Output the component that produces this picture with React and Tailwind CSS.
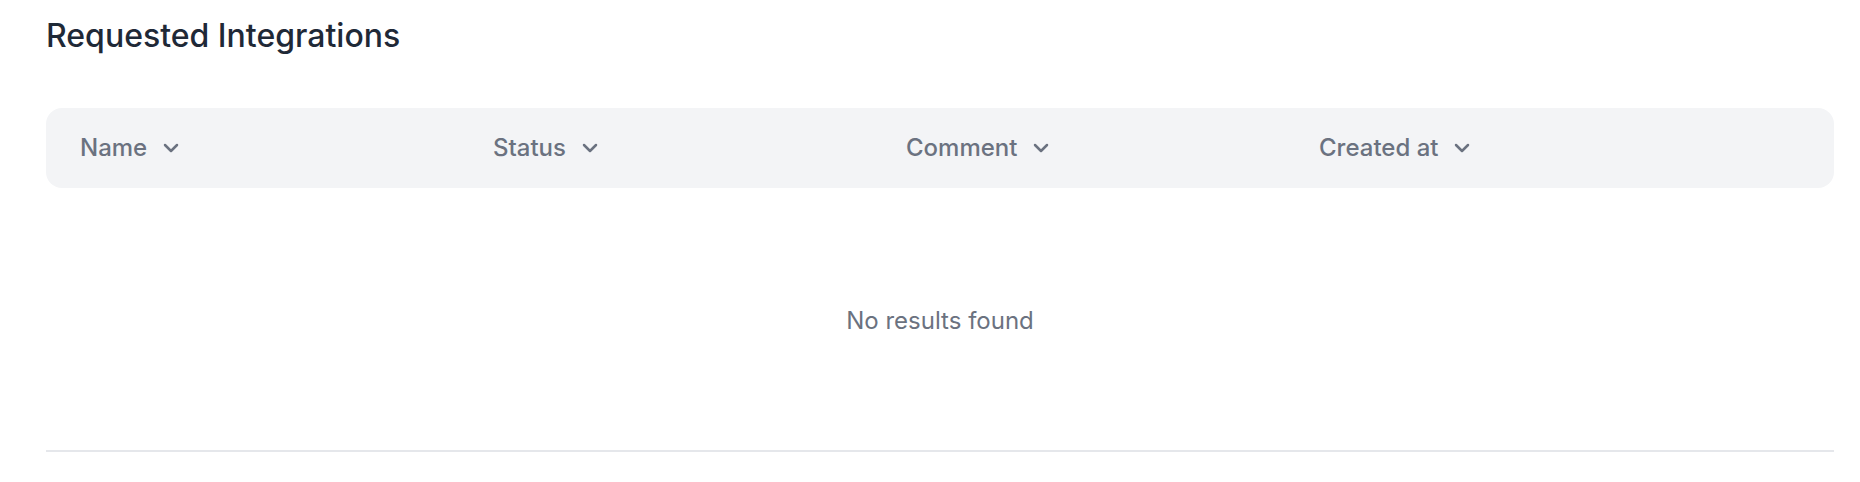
import React from "react";

function Chevron() {
  return (
    <svg width="24" height="24" viewBox="0 0 24 24" fill="none" stroke="currentColor" strokeWidth="2.5" strokeLinecap="round" strokeLinejoin="round" className="text-[#6b7280]">
      <path d="m6 9 6 6 6-6" />
    </svg>
  );
}

const cols = ["Name", "Status", "Comment", "Created at"];

export default function App() {
  return (
    <div className="min-h-[482px] bg-white pl-[46px] pr-[26px] pt-[18px] font-['Inter',sans-serif]">
      <h1 className="text-[32px] leading-[36px] font-medium text-[#1f2937]">Requested Integrations</h1>
      <div className="mt-[54px]">
        <div className="flex h-[80px] items-center rounded-2xl bg-[#f3f4f6] pl-[34px]">
          {cols.map((c) => (
            <div key={c} className="flex w-[413px] items-center gap-3">
              <span className="text-[24px] leading-8 font-medium text-[#6b7280]">{c}</span>
              <Chevron />
            </div>
          ))}
        </div>
        <div className="flex h-[264px] items-center justify-center border-b-2 border-[#e5e7eb] pt-[4px]">
          <span className="text-[24px] leading-8 text-[#6b7280]">No results found</span>
        </div>
      </div>
    </div>
  );
}
